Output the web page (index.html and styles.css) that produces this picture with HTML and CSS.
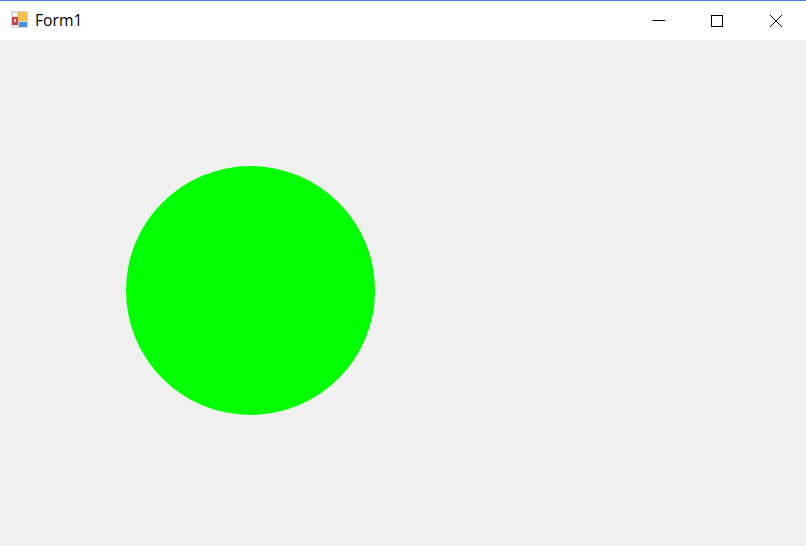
FILE: index.html
```html
<!DOCTYPE html>
<html lang="en">
<head>
<meta charset="utf-8">
<title>Form1</title>
<link rel="stylesheet" href="styles.css">
</head>
<body>
<div class="window">
  <header class="titlebar">
    <svg class="app-icon" width="17" height="17" viewBox="0 0 17 17">
      <rect x="0" y="0" width="17" height="17" fill="#d8d8d8"/>
      <rect x="2" y="2" width="4" height="3" fill="#f4f4f4"/>
      <rect x="1" y="6" width="6" height="8" fill="#c4444c"/>
      <rect x="3" y="8" width="2" height="3" fill="#f0c8c8"/>
      <rect x="7" y="1" width="9" height="9" fill="#f2c14e"/>
      <rect x="8" y="11" width="8" height="5" fill="#4a8fdc"/>
      <rect x="2" y="15" width="5" height="1" fill="#f0f0f0"/>
    </svg>
    <span class="title">Form1</span>
    <div class="controls">
      <button class="control" aria-label="Minimize">
        <svg width="14" height="14" viewBox="0 0 14 14"><path d="M0.5 6.5H13" fill="none" stroke="#000" stroke-width="1"/></svg>
      </button>
      <button class="control" aria-label="Maximize">
        <svg width="14" height="14" viewBox="0 0 14 14"><rect x="1.5" y="1.5" width="11" height="11" fill="none" stroke="#000" stroke-width="1"/></svg>
      </button>
      <button class="control" aria-label="Close">
        <svg width="14" height="14" viewBox="0 0 14 14"><path d="M1 1L13 13M13 1L1 13" fill="none" stroke="#000" stroke-width="1"/></svg>
      </button>
    </div>
  </header>
  <main class="client">
    <div class="circle"></div>
  </main>
</div>
</body>
</html>
```
FILE: styles.css
```css
* { box-sizing: border-box; }
html, body { margin: 0; height: 100%; }
body { overflow: hidden; background: #f0f0f0; }
.window { display: flex; flex-direction: column; width: 806px; height: 546px; }
.titlebar {
  display: flex;
  align-items: center;
  height: 40px;
  flex: none;
  padding-left: 11px;
  background: #fff;
  border-top: 1px solid #3f7fcf;
}
.app-icon { flex: none; margin-bottom: 2px; }
.title {
  margin-left: 7px;
  margin-bottom: 1px;
  font: 15.7px/20px "Open Sans", "Liberation Sans", sans-serif;
  color: #000;
}
.controls { display: flex; margin-left: auto; padding-right: 1px; }
.control {
  display: flex;
  align-items: center;
  justify-content: center;
  width: 58.5px;
  height: 38px;
  padding: 0;
  border: 0;
  background: none;
}
.client { flex: 1; padding: 126px 0 0 126px; background: #f0f0f0; }
.circle { width: 249px; height: 249px; border-radius: 50%; background: #00ff00; }
```
